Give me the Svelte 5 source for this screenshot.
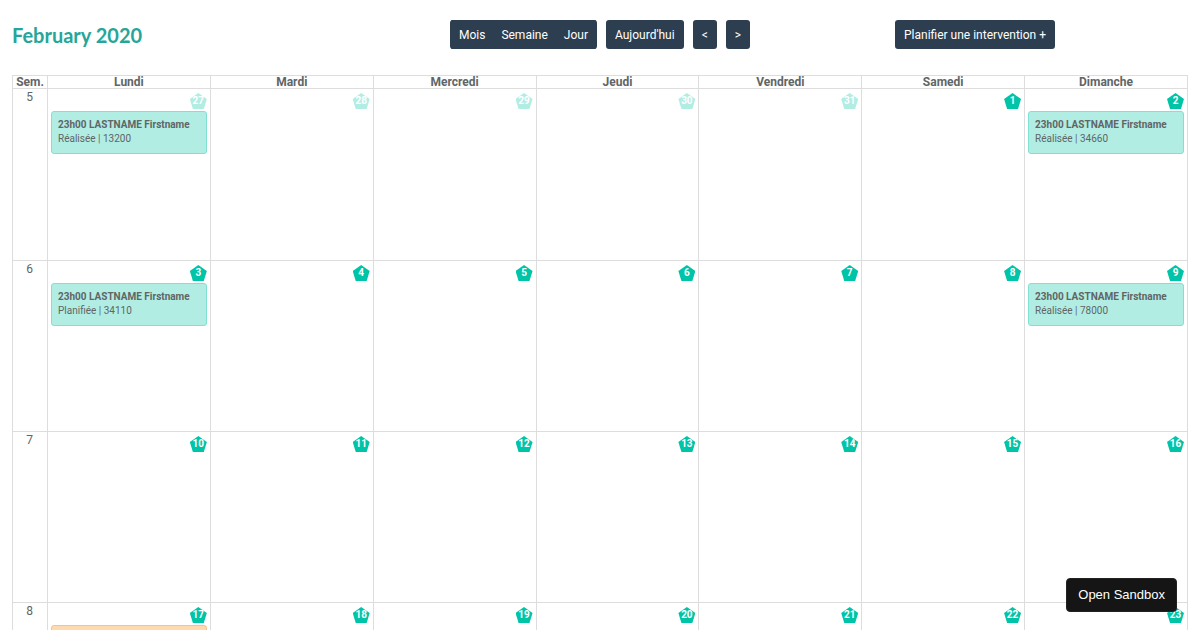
<script>
  const dayNames = ['Lundi', 'Mardi', 'Mercredi', 'Jeudi', 'Vendredi', 'Samedi', 'Dimanche'];
  const views = ['Mois', 'Semaine', 'Jour'];

  const person = '23h00 LASTNAME Firstname';
  const events = {
    '5-27': { title: person, detail: 'Réalisée | 13200', tone: 'done' },
    '5-2': { title: person, detail: 'Réalisée | 34660', tone: 'done' },
    '6-3': { title: person, detail: 'Planifiée | 34110', tone: 'done' },
    '6-9': { title: person, detail: 'Réalisée | 78000', tone: 'done' },
    '8-17': { title: '', detail: '', tone: 'pending' }
  };

  const weeks = [
    { number: 5, days: [27, 28, 29, 30, 31, 1, 2] },
    { number: 6, days: [3, 4, 5, 6, 7, 8, 9] },
    { number: 7, days: [10, 11, 12, 13, 14, 15, 16] },
    { number: 8, days: [17, 18, 19, 20, 21, 22, 23] }
  ];

  const isOutside = (week, day) => week === 5 && day > 20;
</script>

<div class="page">
  <header>
    <h1>February 2020</h1>
    <nav>
      <div class="group">
        {#each views as view}
          <button type="button">{view}</button>
        {/each}
      </div>
      <button type="button">Aujourd'hui</button>
      <button type="button">&lt;</button>
      <button type="button">&gt;</button>
    </nav>
    <div class="actions">
      <button type="button">Planifier une intervention +</button>
    </div>
  </header>

  <table>
    <thead>
      <tr>
        <th class="week" scope="col">Sem.</th>
        {#each dayNames as name}
          <th scope="col">{name}</th>
        {/each}
      </tr>
    </thead>
    <tbody>
      {#each weeks as week}
        <tr>
          <td class="week">{week.number}</td>
          {#each week.days as day}
            {@const event = events[`${week.number}-${day}`]}
            <td>
              <div class="top">
                <span class="badge" class:outside={isOutside(week.number, day)}>{day}</span>
              </div>
              {#if event}
                <div class="event {event.tone}">
                  <strong>{event.title}</strong>
                  <span>{event.detail}</span>
                </div>
              {/if}
            </td>
          {/each}
        </tr>
      {/each}
    </tbody>
  </table>

  <button type="button" class="sandbox">Open Sandbox</button>
</div>

<style>
  :global(body) {
    margin: 0;
    background: #fff;
  }

  .page {
    box-sizing: border-box;
    height: 100vh;
    overflow: hidden;
    padding: 20px 12px 0;
    color: #606566;
    font-family: Roboto, sans-serif;
  }

  header {
    display: grid;
    grid-template-columns: 1fr auto 1fr;
    column-gap: 12px;
    align-items: start;
    margin-bottom: 25px;
  }

  h1 {
    margin: 0;
    color: #26a69a;
    font: 700 20px/30px Lato, sans-serif;
  }

  nav {
    display: flex;
    gap: 9px;
  }

  .group {
    display: flex;
    overflow: hidden;
    padding: 0 1px;
    border-radius: 3px;
    background: #2c3e50;
  }

  .actions {
    display: flex;
    justify-content: center;
  }

  button {
    height: 29px;
    padding: 0 9px;
    border: 0;
    border-radius: 3px;
    background: #2c3e50;
    color: #fff;
    font: 12px/16px Roboto, sans-serif;
    white-space: nowrap;
    cursor: pointer;
  }

  .group button {
    padding: 0 8px;
    border-radius: 0;
  }

  table {
    width: 100%;
    table-layout: fixed;
    border-collapse: collapse;
  }

  th,
  td {
    padding: 0;
    border: 1px solid #ddd;
  }

  th {
    height: 12px;
    font-size: 12px;
    line-height: 12px;
    text-align: center;
  }

  td {
    height: 170px;
    vertical-align: top;
  }

  tbody tr:first-child td {
    height: 171px;
  }

  .week {
    width: 34px;
    text-align: center;
  }

  td.week {
    padding-right: 1px;
    font-size: 12px;
    line-height: 17px;
  }

  .top {
    display: flex;
    justify-content: flex-end;
    padding: 4px 3px 2px;
  }

  .badge {
    width: 17px;
    height: 16px;
    clip-path: polygon(50% 0, 100% 38%, 82% 100%, 18% 100%, 0 38%);
    background: #00c4a7;
    color: #fff;
    font-size: 10px;
    font-weight: 700;
    line-height: 15px;
    text-align: center;
  }

  .outside {
    opacity: 0.3;
  }

  .event {
    box-sizing: border-box;
    height: 43px;
    margin: 0 3px;
    padding: 6px;
    overflow: hidden;
    border: 1px solid;
    border-radius: 3px;
    font-size: 10px;
    line-height: 14px;
    white-space: nowrap;
  }

  .event strong,
  .event span {
    display: block;
  }

  .done {
    border-color: #80e1d2;
    background: #b2ede3;
  }

  .pending {
    border-color: #ffc17e;
    background: #ffd9b0;
  }

  .sandbox {
    position: fixed;
    right: 23px;
    bottom: 18px;
    height: 34px;
    padding: 0 11px;
    border: 1px solid #222;
    border-radius: 4px;
    background: #151515;
    font: 13px/16px "Liberation Sans", sans-serif;
  }
</style>
